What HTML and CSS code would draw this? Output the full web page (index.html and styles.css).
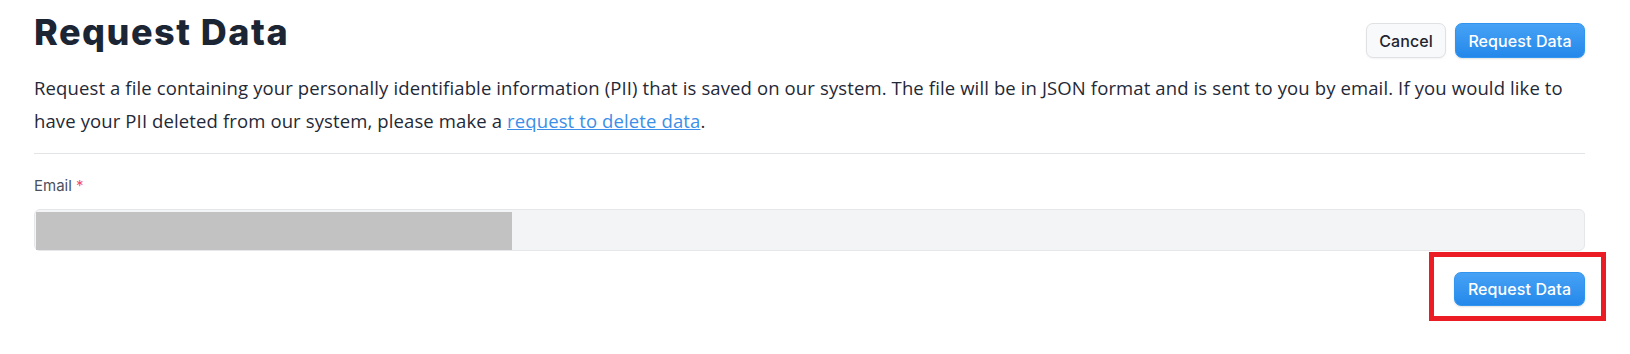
FILE: index.html
```html
<!DOCTYPE html>
<html lang="en">
<head>
<meta charset="utf-8">
<title>Request Data</title>
<link rel="stylesheet" href="styles.css">
</head>
<body>
<main class="page">
  <header class="header">
    <h1 class="title">Request Data</h1>
    <div class="actions">
      <button class="btn btn-secondary" type="button">Cancel</button>
      <button class="btn btn-primary" type="button">Request Data</button>
    </div>
  </header>
  <p class="intro">Request a file containing your personally identifiable information (PII) that is saved on our system. The file will be in JSON format and is sent to you by email. If you would like to have your PII deleted from our system, please make a <a class="link" href="#">request to delete data</a>.</p>
  <hr class="divider">
  <form class="form">
    <label class="label" for="email">Email <span class="req">*</span></label>
    <div class="field">
      <input class="input" id="email" type="email">
      <div class="redact"></div>
    </div>
    <div class="form-actions">
      <div class="highlight">
        <button class="btn btn-primary btn-submit" type="button">Request Data</button>
      </div>
    </div>
  </form>
</main>
</body>
</html>
```

FILE: styles.css
```css
html, body {
  margin: 0;
  padding: 0;
  background: #ffffff;
}

.page {
  width: 1585px;
  min-height: 354px;
  padding: 0 0 0 34px;
  box-sizing: border-box;
}

.header {
  display: flex;
  justify-content: space-between;
  align-items: flex-start;
  padding-top: 10px;
}

.title {
  margin: 0;
  font-family: "Inter", "Liberation Sans", sans-serif;
  font-weight: 800;
  font-size: 36px;
  line-height: 44px;
  color: #1b2533;
  letter-spacing: 1.5px;
}

.actions {
  display: flex;
  gap: 9px;
  padding-top: 13px;
}

.btn {
  font-family: "Inter", "Liberation Sans", sans-serif;
  font-size: 16px;
  font-weight: 500;
  letter-spacing: 0.1px;
  height: 35px;
  padding: 0 8px;
  border-radius: 7px;
  cursor: pointer;
  box-sizing: border-box;
  white-space: nowrap;
}

.btn-secondary {
  width: 80px;
  background: #f8f9fa;
  border: 1px solid #dfe1e4;
  color: #1f2530;
  box-shadow: 0 1px 2px rgba(0,0,0,0.05);
}

.btn-primary {
  width: 130px;
  background: linear-gradient(#47a2f5, #2488ea);
  border: 1px solid #3195ef;
  color: #ffffff;
  box-shadow: 0 1px 2px rgba(0,0,0,0.12);
}

.intro {
  margin: 13px 0 0 0;
  font-family: "Open Sans", "Liberation Sans", sans-serif;
  font-size: 18.5px;
  letter-spacing: 0.12px;
  line-height: 33px;
  color: #1f2937;
}

.link {
  color: #3b8fe8;
  text-decoration: underline;
}

.divider {
  margin: 16px 0 0 0;
  border: 0;
  border-top: 1px solid #e3e4e6;
  height: 0;
}

.form {
  margin: 0;
}

.label {
  display: block;
  margin-top: 22px;
  font-family: "Inter", "Liberation Sans", sans-serif;
  font-size: 15px;
  line-height: 20px;
  color: #4a5060;
}

.req {
  color: #ef4f6b;
}

.field {
  position: relative;
  margin-top: 13px;
}

.input {
  display: block;
  width: 100%;
  height: 42px;
  box-sizing: border-box;
  background: #f3f4f6;
  border: 1px solid #e6e7ea;
  border-radius: 6px;
  outline: none;
}

.redact {
  position: absolute;
  left: 2px;
  top: 3px;
  width: 476px;
  height: 38px;
  background: #c2c2c2;
}

.form-actions {
  display: flex;
  justify-content: flex-end;
  margin-top: 21px;
}

.highlight {
  position: relative;
}

.highlight::after {
  content: "";
  position: absolute;
  left: -25px;
  right: -21px;
  top: -20px;
  bottom: -15px;
  border: 5px solid #ec1c24;
  pointer-events: none;
}

.btn-submit {
  display: block;
  height: 34px;
  width: 131px;
}
```
